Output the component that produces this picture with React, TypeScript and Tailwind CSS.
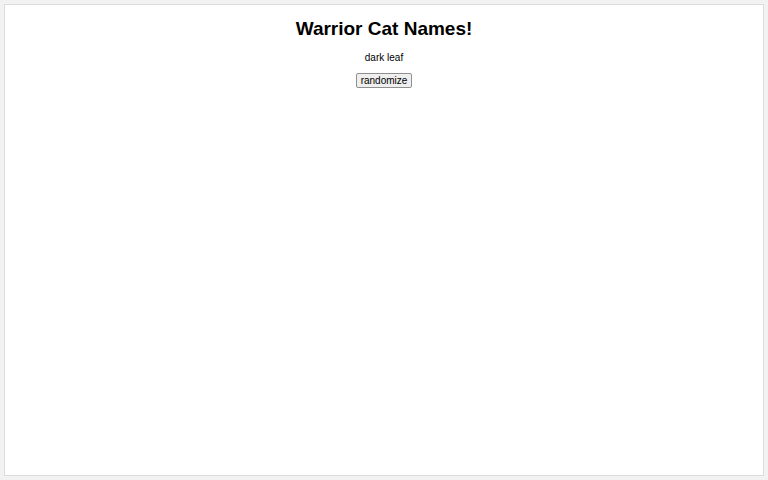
import { useState } from "react";

const prefixes = ["dark", "storm", "fire", "bramble", "moss", "frost", "sand", "ash"];
const suffixes = ["leaf", "pelt", "claw", "heart", "tail", "whisker", "fur", "stripe"];

export default function App() {
  const [name, setName] = useState("dark leaf");

  const randomize = () => {
    const p = prefixes[Math.floor(Math.random() * prefixes.length)];
    const s = suffixes[Math.floor(Math.random() * suffixes.length)];
    setName(`${p} ${s}`);
  };

  return (
    <div className="h-[480px] w-[768px] bg-[#f2f2f2] p-1 font-['Liberation_Sans',Arial,sans-serif] text-black">
      <div className="flex h-full flex-col items-center border border-[#dcdcdc] bg-white">
        <h1 className="mt-[13px] text-[19px] font-bold leading-[22px]">Warrior Cat Names!</h1>
        <p className="mt-[12px] text-[10px] leading-[12px]">{name}</p>
        <button
          className="mt-[9px] rounded-[2px] border border-[#8f8f8f] bg-[#efefef] px-[4px] text-[10px] leading-[13px] hover:bg-[#e5e5e5]"
          onClick={randomize}
        >
          randomize
        </button>
      </div>
    </div>
  );
}
